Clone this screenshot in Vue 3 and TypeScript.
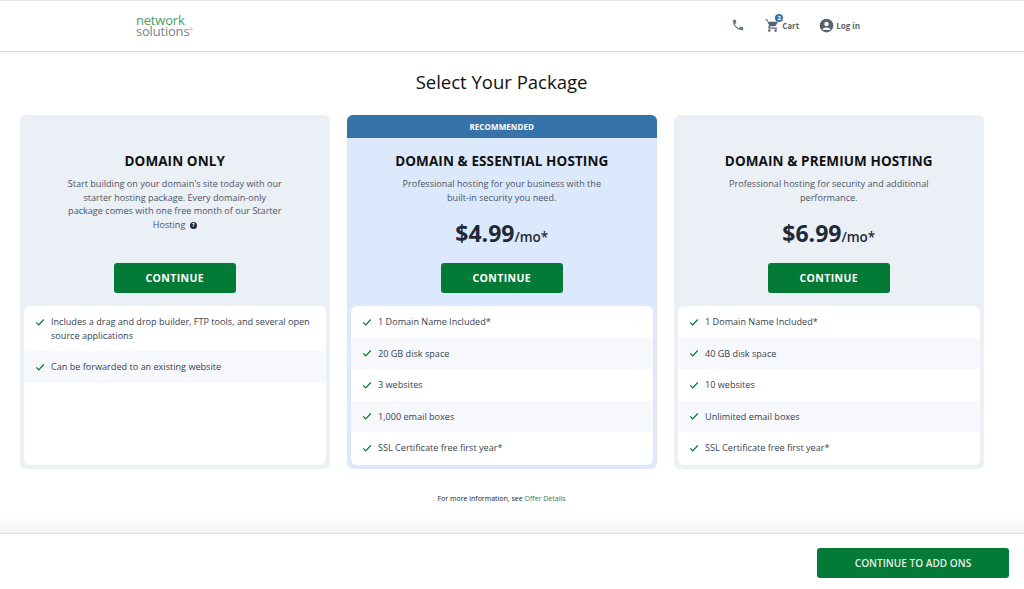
<template>
  <div class="page">
    <header class="topbar">
      <div class="logo">
        <span class="logo-top">network</span>
        <span class="logo-bottom">solutions<sup>®</sup></span>
      </div>
      <nav class="nav">
        <svg class="phone" viewBox="0 0 24 24" width="14" height="14">
          <path d="M6.6 10.8c1.4 2.8 3.8 5.1 6.6 6.6l2.2-2.2c.3-.3.7-.4 1-.2 1.1.4 2.3.6 3.6.6.6 0 1 .4 1 1V20c0 .6-.4 1-1 1C10.6 21 3 13.4 3 4c0-.6.4-1 1-1h3.500c.6 0 1 .4 1 1 0 1.300.2 2.500.6 3.600.1.300 0 .7-.2 1z" />
        </svg>
        <div class="cart">
          <span class="cart-icon">
            <svg viewBox="0 0 24 24" width="15" height="15">
              <path d="M7 18c-1.100 0-2 .9-2 2s.9 2 2 2 2-.9 2-2-.9-2-2-2zM1 2v2h2l3.600 7.600-1.400 2.400c-.7 1.300.3 3 1.800 3h12v-2H7.400c-.1 0-.2-.1-.2-.2l.9-1.800h7.400c.8 0 1.400-.4 1.800-1L21 6H5.200l-.9-2-.3-2zm16 16c-1.100 0-2 .9-2 2s.9 2 2 2 2-.9 2-2-.9-2-2-2z" />
            </svg>
            <span class="cart-badge">2</span>
          </span>
          <span>Cart</span>
        </div>
        <div class="login">
          <svg viewBox="0 0 24 24" width="15" height="15">
            <path d="M12 1a11 11 0 1 0 0 22 11 11 0 0 0 0-22zm0 5a3.500 3.500 0 1 1 0 7 3.500 3.500 0 0 1 0-7zm0 9c2.700 0 6 1.300 6 3v1H6v-1c0-1.700 3.300-3 6-3z" />
          </svg>
          <span>Log in</span>
        </div>
      </nav>
    </header>

    <main class="content">
      <h1>Select Your Package</h1>
      <div class="cards">
        <section
          v-for="plan in plans"
          :key="plan.name"
          class="card"
          :class="{ featured: plan.recommended }"
        >
          <div v-if="plan.recommended" class="ribbon">RECOMMENDED</div>
          <div class="card-head">
            <h2>{{ plan.name }}</h2>
            <p class="desc">
              {{ plan.desc }}
              <span v-if="plan.help" class="help">?</span>
            </p>
            <div v-if="plan.price" class="price">
              {{ plan.price }}<span>/mo*</span>
            </div>
          </div>
          <button class="continue">CONTINUE</button>
          <ul class="features">
            <li v-for="f in plan.features" :key="f">
              <svg viewBox="0 0 12 12" width="10" height="10">
                <path d="M1.500 6.500 4.500 9.500 10.500 3" />
              </svg>
              <span>{{ f }}</span>
            </li>
          </ul>
        </section>
      </div>
      <p class="note">For more information, see <a>Offer Details</a></p>
    </main>

    <div class="fade"></div>
    <footer class="bottom">
      <button class="next">CONTINUE TO ADD ONS</button>
    </footer>
  </div>
</template>

<script setup lang="ts">
interface Plan {
  name: string
  desc: string
  price?: string
  help?: boolean
  recommended?: boolean
  features: string[]
}

const plans: Plan[] = [
  {
    name: 'DOMAIN ONLY',
    desc: "Start building on your domain's site today with our starter hosting package. Every domain-only package comes with one free month of our Starter Hosting",
    help: true,
    features: [
      'Includes a drag and drop builder, FTP tools, and several open source applications',
      'Can be forwarded to an existing website',
    ],
  },
  {
    name: 'DOMAIN & ESSENTIAL HOSTING',
    desc: 'Professional hosting for your business with the built-in security you need.',
    price: '$4.99',
    recommended: true,
    features: [
      '1 Domain Name Included*',
      '20 GB disk space',
      '3 websites',
      '1,000 email boxes',
      'SSL Certificate free first year*',
    ],
  },
  {
    name: 'DOMAIN & PREMIUM HOSTING',
    desc: 'Professional hosting for security and additional performance.',
    price: '$6.99',
    features: [
      '1 Domain Name Included*',
      '40 GB disk space',
      '10 websites',
      'Unlimited email boxes',
      'SSL Certificate free first year*',
    ],
  },
]
</script>

<style>
html,
body {
  margin: 0;
  background: #fff;
}
</style>

<style scoped>
.page {
  height: 589px;
  overflow: hidden;
  display: flex;
  flex-direction: column;
  font-family: 'Open Sans', 'Liberation Sans', sans-serif;
  color: #1f2937;
}

.topbar {
  height: 52px;
  flex: none;
  box-sizing: border-box;
  border-top: 1px solid #e6e6e6;
  border-bottom: 1px solid #dcdcdc;
  box-shadow: 0 1px 3px rgba(0, 0, 0, 0.08);
  display: flex;
  align-items: center;
  justify-content: space-between;
  padding: 0 164px 0 136px;
}

.logo {
  display: flex;
  flex-direction: column;
  line-height: 11px;
  font-size: 13px;
  letter-spacing: -0.2px;
}

.logo-top {
  color: #4f9a5d;
}

.logo-bottom {
  color: #7b8389;
}

.logo-bottom sup {
  font-size: 4px;
  line-height: 0;
}

.nav {
  display: flex;
  align-items: center;
  font-size: 8px;
  font-weight: 700;
  color: #5c6670;
  margin-top: -2px;
}

.nav svg {
  fill: #56626e;
  display: block;
}

.nav .phone {
  fill: #6d7883;
  margin-right: 20px;
}

.cart,
.login {
  display: flex;
  align-items: center;
  gap: 2px;
}

.cart {
  margin-right: 20px;
}

.cart-icon {
  position: relative;
  display: block;
}

.cart-badge {
  position: absolute;
  top: -4px;
  right: -3px;
  width: 8px;
  height: 8px;
  border-radius: 50%;
  background: #3673a9;
  color: #fff;
  font-size: 6px;
  line-height: 8px;
  text-align: center;
}

.content {
  flex: 1;
  min-height: 0;
}

h1 {
  margin: 17px 0 21px;
  text-align: center;
  font-size: 18.500px;
  line-height: 25px;
  font-weight: 500;
  color: #111;
  padding-right: 21px;
}

.cards {
  display: flex;
  gap: 17.500px;
  padding-left: 20px;
}

.card {
  width: 309.500px;
  height: 354px;
  box-sizing: border-box;
  border-radius: 6px;
  background: #ebeff6;
  padding: 0 4px 4px;
  display: flex;
  flex-direction: column;
  align-items: center;
}

.card.featured {
  background: #dce9fd;
}

.ribbon {
  align-self: stretch;
  flex: none;
  margin: 0 -4px;
  height: 23px;
  border-radius: 6px 6px 0 0;
  background: #3673a9;
  color: #fff;
  font-size: 8px;
  font-weight: 700;
  line-height: 23px;
  text-align: center;
  letter-spacing: 0.1px;
}

.card-head {
  height: 147.500px;
  flex: none;
  box-sizing: border-box;
  padding-top: 37px;
  text-align: center;
}

.featured .card-head {
  height: 124.500px;
  padding-top: 14px;
}

h2 {
  margin: 0;
  font-size: 13.500px;
  line-height: 18px;
  font-weight: 700;
  color: #111;
  letter-spacing: 0.1px;
}

.desc {
  margin: 7px auto 0;
  width: 216px;
  font-size: 9.100px;
  line-height: 13.500px;
  color: #4b5563;
}

.help {
  display: inline-block;
  width: 7px;
  height: 7px;
  margin-left: 2px;
  border-radius: 50%;
  background: #1f2a44;
  color: #fff;
  font-size: 5.500px;
  font-weight: 700;
  line-height: 7px;
  vertical-align: 1px;
}

.price {
  margin-top: 14px;
  font-size: 23px;
  line-height: 31px;
  font-weight: 700;
  color: #1f2937;
}

.price span {
  font-size: 13.500px;
  font-weight: 600;
}

.continue {
  width: 122px;
  height: 30px;
  flex: none;
  border: 0;
  border-radius: 3px;
  background: #037a35;
  color: #fff;
  font-family: inherit;
  font-size: 10.500px;
  font-weight: 700;
  letter-spacing: 0.4px;
}

.features {
  flex: 1;
  align-self: stretch;
  margin: 13.500px 0 0;
  padding: 0;
  list-style: none;
  background: #fff;
  border-radius: 6px;
  overflow: hidden;
}

.features li {
  display: flex;
  gap: 6px;
  padding: 9px 12px 9px 11px;
  font-size: 9.100px;
  line-height: 13.500px;
  color: #374151;
}

.features li:nth-child(even) {
  background: #f6f8fb;
}

.features svg {
  flex: none;
  margin-top: 1.500px;
  fill: none;
  stroke: #037a35;
  stroke-width: 1.500;
}

.note {
  margin: 25px 0 0;
  text-align: center;
  font-size: 7px;
  line-height: 10px;
  font-weight: 500;
  color: #222;
  padding-right: 21px;
}

.note a {
  color: #2f7d55;
}

.fade {
  height: 18px;
  flex: none;
  background: linear-gradient(#fff, #f3f3f3);
}

.bottom {
  height: 56px;
  flex: none;
  box-sizing: border-box;
  border-top: 1px solid #dcdcdc;
  display: flex;
  justify-content: flex-end;
  padding: 14px 15px 0 0;
}

.next {
  width: 192px;
  height: 30px;
  border: 0;
  border-radius: 3px;
  background: #037a35;
  color: #e6f0ea;
  font-family: inherit;
  font-size: 10.100px;
  font-weight: 600;
}
</style>
